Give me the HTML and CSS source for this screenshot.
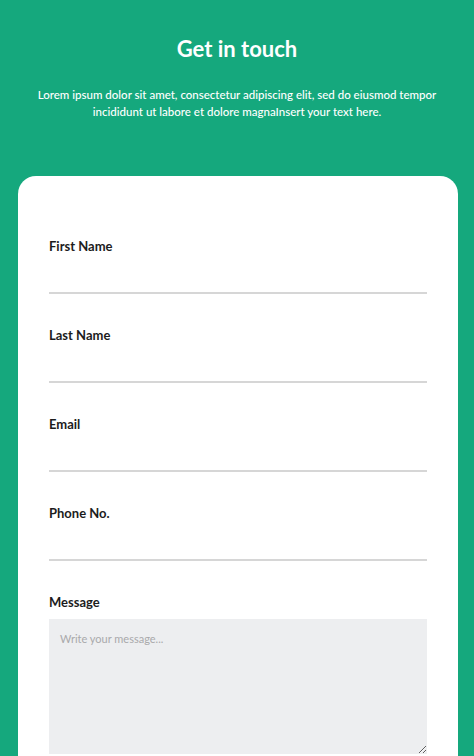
FILE: index.html
```html
<!DOCTYPE html>
<html>
<head>
<meta charset="utf-8">
<link rel="stylesheet" href="styles.css">
</head>
<body>
<div class="page">
  <header class="hero">
    <h1 class="hero-title">Get in touch</h1>
    <p class="hero-text">Lorem ipsum dolor sit amet, consectetur adipiscing elit, sed do eiusmod tempor incididunt ut labore et dolore magnaInsert your text here.</p>
  </header>
  <form class="card">
    <div class="field">
      <label class="label">First Name</label>
      <input class="input" type="text">
    </div>
    <div class="field">
      <label class="label">Last Name</label>
      <input class="input" type="text">
    </div>
    <div class="field">
      <label class="label">Email</label>
      <input class="input" type="text">
    </div>
    <div class="field">
      <label class="label">Phone No.</label>
      <input class="input" type="text">
    </div>
    <div class="field field-msg">
      <label class="label">Message</label>
      <textarea class="textarea" placeholder="Write your message..."></textarea>
    </div>
  </form>
</div>
</body>
</html>
```
FILE: styles.css
```css
* { box-sizing: border-box; }
html, body { margin: 0; padding: 0; }
body {
  background: #15a87d;
  font-family: "Lato", "Noto Sans", sans-serif;
  overflow: hidden;
}
.page { width: 474px; }
.hero {
  padding: 35px 30px 0;
  text-align: center;
  color: #ffffff;
}
.hero-title {
  margin: 0;
  font-size: 22px;
  line-height: 28px;
  font-weight: 700;
}
.hero-text {
  margin: 23px 0 0;
  font-size: 11.5px;
  line-height: 17px;
  font-weight: 500;
}
.card {
  margin: 56px 16px 0 18px;
  background: #ffffff;
  border-radius: 18px 18px 0 0;
  padding: 61px 31px 40px 31px;
  display: flex;
  flex-direction: column;
  gap: 32px;
  min-height: 700px;
}
.field { display: flex; flex-direction: column; }
.label {
  font-size: 13px;
  line-height: 18px;
  font-weight: 700;
  color: #1c1c1c;
}
.input {
  border: none;
  border-bottom: 2px solid #d6d6d6;
  height: 39px;
  outline: none;
  background: transparent;
  padding: 0;
  font: inherit;
}
.textarea {
  margin-top: 8px;
  height: 135px;
  border: none;
  background: #edeef0;
  padding: 13px 11px;
  font-family: inherit;
  font-size: 11px;
  resize: vertical;
  outline: none;
}
.textarea::placeholder { color: #a9a9ab; }
```
